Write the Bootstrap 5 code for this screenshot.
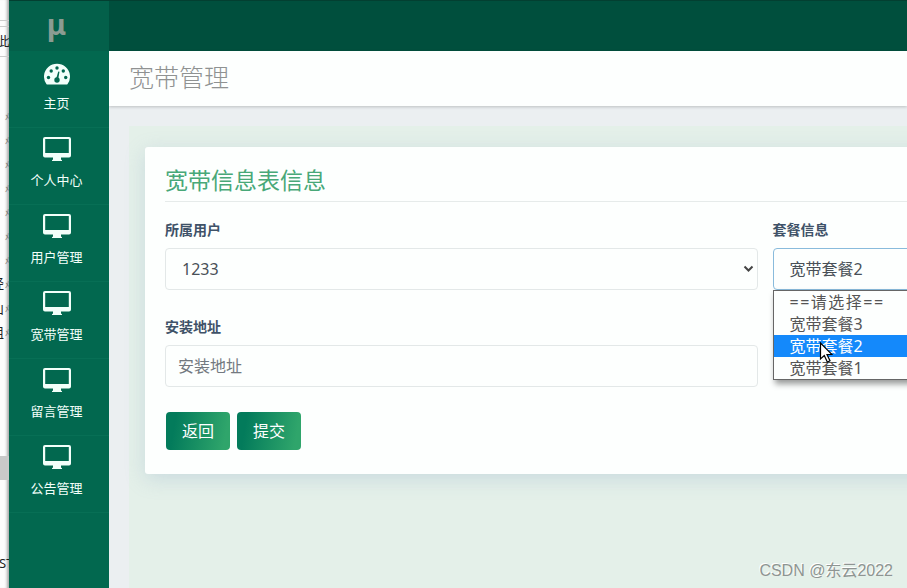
<!DOCTYPE html>
<html lang="zh-CN">
<head>
<meta charset="utf-8">
<meta name="viewport" content="width=device-width, initial-scale=1">
<title>宽带管理</title>
<link href="https://cdn.jsdelivr.net/npm/bootstrap@5.3.0/dist/css/bootstrap.min.css" rel="stylesheet">
<style>
body{font-family:"Noto Sans","Noto Sans CJK SC",sans-serif;background:#ebeff1;height:588px;overflow:hidden}
.shell{height:588px}
/* window behind the application */
.behind{width:9px;background:#fdfdfd;font-size:13px;line-height:16px;color:#222;box-shadow:inset -4px 0 3px -2px #aaa}
.behind span{position:absolute;white-space:nowrap}
.behind .rule{left:0;width:9px;height:1px;background:#ccc}
.behind .tick{left:5px;font-size:9px;color:#777}
.behind .sel{left:0;top:456px;width:9px;height:24px;background:#c9c9c9}
.side{width:100px;background:#02684f;border-top:1px solid #033f31}
.logo{height:50px;padding-right:5px;background:#03604a;color:#8b9c92;font:700 29px/46px "Noto Sans",sans-serif}
.side .nav-link{height:77px;padding:9px 5px 0 0;color:#f2fffa;font-size:13px;line-height:20px;border-bottom:1px solid #076f55}
.side .nav-link svg{display:block;margin:0 auto 8px}
.side .nav-link:first-child{padding-top:12px}
.topbar{height:51px;background:#004f3d;border-top:1px solid #033f31}
.pagehead{height:55px;padding-left:20px;background:#fdfffe;box-shadow:0 1px 3px rgba(0,0,0,.2);position:relative}
.pagehead h1{font-size:25px;line-height:53px;font-weight:300;color:#8f9292}
.content-area{margin:20px 0 0 20px;padding:21px 0 0 16px;background:#e4f0e9}
.panel{width:1255px;height:327px;padding:20px;background:#fdfffe;border-radius:3px;box-shadow:0 5px 20px rgba(140,170,200,.3)}
.panel h2{font-size:23px;line-height:26px;height:35px;font-weight:400;color:#48a878;border-bottom:1px solid #e6ebea}
.fields{--bs-gutter-x:15px}
.fields.first{padding-top:18px}
.fields.address{padding-top:27px}
.fields .col-6{width:607.5px}
.form-label{font-size:14px;line-height:20px;font-weight:700;color:#3f5268;margin-bottom:8px;display:block}
.form-control,.form-select{height:42px;font-size:16px;color:#495057;border:1px solid #e3e8e8;border-radius:4px;background-color:#fdfffe}
.form-select{padding:0 0 0 16px;line-height:41px;background-image:none}
.form-control::placeholder{color:#737980}
.form-select.opened{border-color:#89bbdc}
.caret{right:4px;top:17px;position:absolute}
.options{position:absolute;top:42px;left:0;width:593px;border:1px solid #666;background:#fdfffe;box-shadow:2px 4px 6px rgba(0,0,0,.4);font-size:16px;color:#555;z-index:3}
.options li{height:22px;line-height:22px;padding-left:16px}
.options .eq{letter-spacing:1.5px}
.options .picked{background:#1489fb;color:#fff}
.actions{padding:25px 0 0 1px;gap:7px}
.btn-leaf{width:64px;height:38px;padding:0;font-size:16px;line-height:38px;color:#fff;border:0;border-radius:4px;background:linear-gradient(100deg,#037b5b 15%,#2fa56b 90%)}
.pointer{position:absolute;left:819px;top:342px;z-index:5}
.credit{position:absolute;right:14px;bottom:5px;font:16px/24px "Liberation Sans","Noto Sans CJK SC",sans-serif;color:#8e9592;text-shadow:-1px -1px 0 #fff}
</style>
<script src="https://cdn.jsdelivr.net/npm/bootstrap@5.3.0/dist/js/bootstrap.bundle.min.js"></script>
</head>
<body>
<svg class="d-none">
<symbol id="screen" viewBox="0 0 28 25"><path fill="currentColor" fill-rule="evenodd" d="M2 0h24A2 2 0 0 1 28 2v16.500a2 2 0 0 1-2 2h-8v2l1 .7V24H9v-.8l1-.7v-2H2A2 2 0 0 1 0 18.500V2A2 2 0 0 1 2 0zM2.200 2v14h23.600V2z"/></symbol>
<symbol id="chevron" viewBox="0 0 11 8"><path d="M1.500 1.500l4 4 4-4" fill="none" stroke="#444" stroke-width="2"/></symbol>
</svg>
<div class="shell d-flex overflow-hidden">
  <div class="behind position-relative overflow-hidden flex-shrink-0">
    <span class="rule" style="top:20px"></span><span class="rule" style="top:26px"></span>
    <span style="left:-3px;top:33px">此</span><span class="rule" style="top:56px"></span>
    <span class="tick" style="top:109px">ﾒ</span><span class="tick" style="top:133px">ﾒ</span><span class="tick" style="top:157px">ﾒ</span><span class="tick" style="top:181px">ﾒ</span><span class="tick" style="top:205px">ﾒ</span><span class="tick" style="top:229px">ﾒ</span><span class="tick" style="top:253px">ﾒ</span><span class="tick" style="top:277px">ﾒ</span><span class="tick" style="top:301px">ﾒ</span><span class="tick" style="top:325px">ﾒ</span>
    <span style="left:-9px;top:275px">经</span><span style="left:-9px;top:300px">山</span><span style="left:-9px;top:324px">组</span>
    <span class="sel"></span><span style="left:-1px;top:555px">ST</span>
  </div>
  <aside class="side flex-shrink-0 text-center">
    <div class="logo" lang="el">μ</div>
    <nav class="nav flex-column flex-nowrap">
      <a class="nav-link" href="#"><svg width="26" height="22" viewBox="0 0 26 22"><path fill="currentColor" d="M2.400 21A13 12.800 0 1 1 23.600 21Q23.200 21.500 22.500 21.500h-19Q2.800 21.500 2.400 21z"/><g fill="#02684f"><circle cx="4.500" cy="14.500" r="1.700"/><circle cx="7.200" cy="8" r="1.700"/><circle cx="13" cy="5" r="1.700"/><circle cx="19.300" cy="8" r="1.700"/><circle cx="21.700" cy="14.500" r="1.700"/><circle cx="13" cy="17" r="2.700"/><path d="M12 16L14.300 8.500l1.200.3L14 17z"/></g></svg>主页</a>
      <a class="nav-link" href="#"><svg width="28" height="25"><use href="#screen"/></svg>个人中心</a>
      <a class="nav-link" href="#"><svg width="28" height="25"><use href="#screen"/></svg>用户管理</a>
      <a class="nav-link" href="#"><svg width="28" height="25"><use href="#screen"/></svg>宽带管理</a>
      <a class="nav-link" href="#"><svg width="28" height="25"><use href="#screen"/></svg>留言管理</a>
      <a class="nav-link" href="#"><svg width="28" height="25"><use href="#screen"/></svg>公告管理</a>
    </nav>
  </aside>
  <main class="d-flex flex-column flex-grow-1 overflow-hidden">
    <header class="topbar flex-shrink-0"></header>
    <div class="pagehead flex-shrink-0"><h1 class="m-0">宽带管理</h1></div>
    <section class="content-area flex-grow-1">
      <form class="panel">
        <h2 class="mb-0">宽带信息表信息</h2>
        <div class="row fields first flex-nowrap">
          <div class="col-6 flex-shrink-0">
            <label class="form-label">所属用户</label>
            <div class="position-relative"><div class="form-select">1233</div><svg class="caret" width="11" height="8"><use href="#chevron"/></svg></div>
          </div>
          <div class="col-6 flex-shrink-0">
            <label class="form-label">套餐信息</label>
            <div class="position-relative"><div class="form-select opened">宽带套餐2</div>
              <ul class="options list-unstyled m-0"><li class="eq">==请选择==</li><li>宽带套餐3</li><li class="picked">宽带套餐2</li><li>宽带套餐1</li></ul>
            </div>
          </div>
        </div>
        <div class="row fields address">
          <div class="col-6">
            <label class="form-label">安装地址</label>
            <input class="form-control" placeholder="安装地址">
          </div>
        </div>
        <div class="d-flex actions"><button type="button" class="btn btn-leaf">返回</button><button type="button" class="btn btn-leaf">提交</button></div>
      </form>
    </section>
  </main>
</div>
<svg class="pointer" width="14" height="22" viewBox="0 0 14 22"><path d="M1.500 1v16l3.800-3.500 3 6.500 2.700-1.200-3-6.300H13z" fill="#fff" stroke="#000" stroke-width="1.200"/></svg>
<div class="credit">CSDN @东云2022</div>
</body>
</html>
